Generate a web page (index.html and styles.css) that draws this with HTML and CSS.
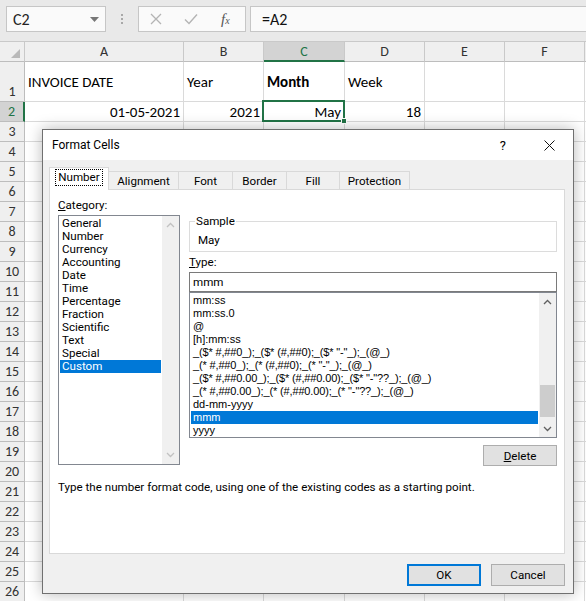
FILE: index.html
```html
<!DOCTYPE html>
<html lang="en">
<head>
    <meta charset="UTF-8">
    <meta name="viewport" content="width=device-width, initial-scale=1.0">
    <title>Format Cells</title>
    <link rel="stylesheet" href="styles.css">
</head>
<body>
    <div class="ribbon">
        <div class="namebox">
            <span>C2</span>
            <svg class="drop" width="9" height="5" viewBox="0 0 9 5"><path d="M0 0H9L4.5 5Z" fill="#777"/></svg>
        </div>
        <div class="grip"><i></i><i></i><i></i></div>
        <div class="fxbox">
            <svg width="12" height="12" viewBox="0 0 12 12"><path d="M1 1L11 11M11 1L1 11" stroke="#b4b4b4" stroke-width="1.3"/></svg>
            <svg width="14" height="12" viewBox="0 0 14 12"><path d="M1 6.5L5 10.5L13 1.5" fill="none" stroke="#b4b4b4" stroke-width="1.4"/></svg>
            <span class="fx">f<small>x</small></span>
        </div>
        <div class="formula">=A2</div>
    </div>

    <div class="sheet">
        <div class="row head">
            <span class="corner"><svg width="9" height="9" viewBox="0 0 9 9"><path d="M9 0V9H0Z" fill="#b9b9b9"/></svg></span>
            <span>A</span><span>B</span><span class="sel">C</span><span>D</span><span>E</span><span>F</span><span></span>
        </div>
        <div class="row tall">
            <span class="rh">1</span>
            <span>INVOICE DATE</span><span>Year</span><span class="bold">Month</span><span>Week</span><span></span><span></span><span></span>
        </div>
        <div class="row">
            <span class="rh sel">2</span>
            <span class="num">01-05-2021</span><span class="num">2021</span><span class="num cur">May</span><span class="num">18</span><span></span><span></span><span></span>
        </div>
        <div class="row"><span class="rh">3</span><span></span><span></span><span></span><span></span><span></span><span></span><span></span></div>
        <div class="row"><span class="rh">4</span><span></span><span></span><span></span><span></span><span></span><span></span><span></span></div>
        <div class="row"><span class="rh">5</span><span></span><span></span><span></span><span></span><span></span><span></span><span></span></div>
        <div class="row"><span class="rh">6</span><span></span><span></span><span></span><span></span><span></span><span></span><span></span></div>
        <div class="row"><span class="rh">7</span><span></span><span></span><span></span><span></span><span></span><span></span><span></span></div>
        <div class="row"><span class="rh">8</span><span></span><span></span><span></span><span></span><span></span><span></span><span></span></div>
        <div class="row"><span class="rh">9</span><span></span><span></span><span></span><span></span><span></span><span></span><span></span></div>
        <div class="row"><span class="rh">10</span><span></span><span></span><span></span><span></span><span></span><span></span><span></span></div>
        <div class="row"><span class="rh">11</span><span></span><span></span><span></span><span></span><span></span><span></span><span></span></div>
        <div class="row"><span class="rh">12</span><span></span><span></span><span></span><span></span><span></span><span></span><span></span></div>
        <div class="row"><span class="rh">13</span><span></span><span></span><span></span><span></span><span></span><span></span><span></span></div>
        <div class="row"><span class="rh">14</span><span></span><span></span><span></span><span></span><span></span><span></span><span></span></div>
        <div class="row"><span class="rh">15</span><span></span><span></span><span></span><span></span><span></span><span></span><span></span></div>
        <div class="row"><span class="rh">16</span><span></span><span></span><span></span><span></span><span></span><span></span><span></span></div>
        <div class="row"><span class="rh">17</span><span></span><span></span><span></span><span></span><span></span><span></span><span></span></div>
        <div class="row"><span class="rh">18</span><span></span><span></span><span></span><span></span><span></span><span></span><span></span></div>
        <div class="row"><span class="rh">19</span><span></span><span></span><span></span><span></span><span></span><span></span><span></span></div>
        <div class="row"><span class="rh">20</span><span></span><span></span><span></span><span></span><span></span><span></span><span></span></div>
        <div class="row"><span class="rh">21</span><span></span><span></span><span></span><span></span><span></span><span></span><span></span></div>
        <div class="row"><span class="rh">22</span><span></span><span></span><span></span><span></span><span></span><span></span><span></span></div>
        <div class="row"><span class="rh">23</span><span></span><span></span><span></span><span></span><span></span><span></span><span></span></div>
        <div class="row"><span class="rh">24</span><span></span><span></span><span></span><span></span><span></span><span></span><span></span></div>
        <div class="row"><span class="rh">25</span><span></span><span></span><span></span><span></span><span></span><span></span><span></span></div>
        <div class="row"><span class="rh">26</span><span></span><span></span><span></span><span></span><span></span><span></span><span></span></div>
    </div>

    <div class="dialog">
        <div class="titlebar">
            <span class="title">Format Cells</span>
            <span class="help">?</span>
            <svg class="close" width="11" height="11" viewBox="0 0 11 11"><path d="M0.5 0.5L10.5 10.5M10.5 0.5L0.5 10.5" stroke="#111" stroke-width="1"/></svg>
        </div>
        <div class="dlg-body">
            <div class="tabs">
                <div class="tab on"><span class="focus">Number</span></div>
                <div class="tab t-align">Alignment</div>
                <div class="tab t-font">Font</div>
                <div class="tab t-border">Border</div>
                <div class="tab t-fill">Fill</div>
                <div class="tab t-prot">Protection</div>
            </div>
            <div class="panel">
                <div class="cat">
                    <div class="lbl"><u>C</u>ategory:</div>
                    <div class="listbox cat-list">
                        <ul>
                            <li>General</li>
                            <li>Number</li>
                            <li>Currency</li>
                            <li>Accounting</li>
                            <li>Date</li>
                            <li>Time</li>
                            <li>Percentage</li>
                            <li>Fraction</li>
                            <li>Scientific</li>
                            <li>Text</li>
                            <li>Special</li>
                            <li class="picked">Custom</li>
                        </ul>
                        <div class="vscroll off">
                            <svg width="9" height="6" viewBox="0 0 9 6"><path d="M1 5L4.5 1.5L8 5" fill="none" stroke="currentColor" stroke-width="1.3"/></svg>
                            <svg width="9" height="6" viewBox="0 0 9 6"><path d="M1 1L4.5 4.5L8 1" fill="none" stroke="currentColor" stroke-width="1.3"/></svg>
                        </div>
                    </div>
                </div>
                <div class="right">
                    <fieldset class="sample">
                        <legend>Sample</legend>
                        <div class="sample-val">May</div>
                    </fieldset>
                    <div class="lbl type-lbl"><u>T</u>ype:</div>
                    <div class="input">mmm</div>
                    <div class="listbox type-list">
                        <ul>
                            <li>mm:ss</li>
                            <li>mm:ss.0</li>
                            <li>@</li>
                            <li>[h]:mm:ss</li>
                            <li class="code">_($* #,##0_);_($* (#,##0);_($* "-"_);_(@_)</li>
                            <li class="code">_(* #,##0_);_(* (#,##0);_(* "-"_);_(@_)</li>
                            <li class="code">_($* #,##0.00_);_($* (#,##0.00);_($* "-"??_);_(@_)</li>
                            <li class="code">_(* #,##0.00_);_(* (#,##0.00);_(* "-"??_);_(@_)</li>
                            <li>dd-mm-yyyy</li>
                            <li class="picked">mmm</li>
                            <li>yyyy</li>
                        </ul>
                        <div class="vscroll">
                            <svg width="9" height="6" viewBox="0 0 9 6"><path d="M1 5L4.5 1.5L8 5" fill="none" stroke="currentColor" stroke-width="1.3"/></svg>
                            <div class="track"><div class="thumb"></div></div>
                            <svg width="9" height="6" viewBox="0 0 9 6"><path d="M1 1L4.5 4.5L8 1" fill="none" stroke="currentColor" stroke-width="1.3"/></svg>
                        </div>
                    </div>
                    <div class="del-row"><button class="btn"><u>D</u>elete</button></div>
                </div>
                <p class="hint">Type the number format code, using one of the existing codes as a starting point.</p>
            </div>
            <div class="buttons">
                <button class="btn ok">OK</button>
                <button class="btn">Cancel</button>
            </div>
        </div>
    </div>
</body>
</html>
```

FILE: styles.css
```css
*,*::after,*::before{
    box-sizing: border-box;
}
body{
    margin: 0;
    overflow: hidden;
    position: relative;
    width: 586px;
    height: 601px;
    background: #fff;
    font-family: Carlito, Lato, "Liberation Sans", sans-serif;
}

/* formula bar */
.ribbon{
    height: 42px;
    background: #e9e9e9;
    border-bottom: 1px solid #c9c9c9;
    display: flex;
    align-items: flex-start;
    padding: 6px 0 0 6px;
}
.namebox,.fxbox,.formula{
    height: 26px;
    background: #fafafa;
    border: 1px solid #c6c6c6;
    display: flex;
    align-items: center;
}
.namebox{
    width: 100px;
    padding: 0 0 0 6px;
    justify-content: space-between;
    font-size: 16px;
    color: #222;
}
.namebox .drop{
    margin-right: 6px;
}
.grip{
    width: 32px;
    height: 26px;
    display: flex;
    flex-direction: column;
    align-items: center;
    justify-content: center;
    gap: 2px;
}
.grip i{
    width: 2px;
    height: 2px;
    background: #a8a8a8;
}
.fxbox{
    width: 108px;
    padding: 0 0 0 11px;
    gap: 22px;
}
.fx{
    font-family: "Liberation Serif", serif;
    font-style: italic;
    font-size: 15px;
    color: #555;
    margin-left: 1px;
}
.fx small{
    font-size: 10px;
}
.formula{
    flex: 1;
    margin-left: 4px;
    border-right: none;
    padding-left: 11px;
    font-size: 16px;
    color: #111;
}

/* grid */
.row{
    display: flex;
    height: 20px;
}
.row > span{
    flex: none;
    width: 80px;
    height: 100%;
    border-right: 1px solid #dadada;
    border-bottom: 1px solid #dadada;
    font-size: 15px;
    padding: 0 3px;
    display: flex;
    align-items: center;
    white-space: nowrap;
}
.row > span:nth-child(1){ width: 25px; }
.row > span:nth-child(2){ width: 159px; }
.row > span:nth-child(4){ width: 81px; }
.row .rh,.row.head > span{
    background: #efefef;
    border-color: #bdbdbd;
    color: #333;
    justify-content: center;
    font-size: 14px;
    padding: 0;
}
.row.head > span{
    border-right-color: #c9c9c9;
}
.row.head .corner{
    justify-content: flex-end;
    align-items: flex-end;
    padding: 0 4px 3px 0;
}
.row.head .sel{
    background: #d3d3d3;
    color: #217346;
    border-bottom: 2px solid #217346;
}
.row .rh.sel{
    background: #d3d3d3;
    color: #217346;
    border-right: 2px solid #217346;
}
.row.tall{
    height: 40px;
}
.row.tall .rh{
    align-items: flex-end;
    padding-bottom: 1px;
}
.bold{
    font-weight: bold;
}
.num{
    justify-content: flex-end;
}
.row > span.cur{
    position: relative;
}
.cur::before{
    content: '';
    position: absolute;
    left: -2px;
    top: -2px;
    right: -1px;
    bottom: -1px;
    border: 2px solid #217346;
}
.cur::after{
    content: '';
    position: absolute;
    right: -3px;
    bottom: -3px;
    width: 6px;
    height: 6px;
    background: #217346;
    border: 1px solid #fff;
}

/* dialog */
.dialog{
    position: absolute;
    left: 42px;
    top: 129px;
    width: 532px;
    height: 465px;
    border: 1px solid #707070;
    background: #f0f0f0;
    box-shadow: 0 0 14px rgba(0,0,0,.28);
    font-family: "Segoe UI", Roboto, "Noto Sans", sans-serif;
    font-size: 11.6px;
    color: #000;
    display: flex;
    flex-direction: column;
}
.titlebar{
    height: 30px;
    background: #fff;
    display: flex;
    align-items: center;
    padding: 0 0 0 9px;
}
.title{
    flex: 1;
    font-size: 12px;
}
.help{
    font-size: 13px;
    margin-right: 38px;
}
.close{
    margin-right: 18px;
}
.dlg-body{
    flex: 1;
    padding: 7px 8px 0 6px;
}
.tabs{
    display: flex;
    align-items: flex-end;
    height: 22px;
    position: relative;
    z-index: 1;
}
.tab{
    height: 18px;
    border: 1px solid #d9d9d9;
    border-bottom: none;
    margin-left: -1px;
    display: flex;
    align-items: center;
    justify-content: center;
    background: #f0f0f0;
}
.tab.on{
    width: 60px;
    height: 23px;
    margin-left: 0;
    margin-bottom: -1px;
    background: #fff;
    padding-bottom: 3px;
}
.focus{
    border: 1px dotted #000;
    padding: 0 2px;
    line-height: 15px;
}
.t-align{ width: 71px; }
.t-font{ width: 55px; }
.t-border{ width: 55px; }
.t-fill{ width: 54px; }
.t-prot{ width: 71px; }

.panel{
    height: 365px;
    background: #fff;
    border: 1px solid #d9d9d9;
    display: grid;
    grid-template-columns: 122px 368px;
    column-gap: 9px;
    align-content: start;
    padding: 8px 0 0 8px;
}
.lbl{
    line-height: 15px;
}
.listbox{
    border: 1px solid #828790;
    display: flex;
    background: #fff;
}
.listbox ul{
    flex: 1;
    list-style: none;
    margin: 0;
    padding: 1px;
}
.listbox li{
    height: 13px;
    line-height: 13px;
    padding-left: 2px;
    white-space: nowrap;
}
.listbox li.picked{
    background: #0078d7;
    color: #fff;
}
.cat-list{
    height: 250px;
    margin-top: 2px;
}
.type-list li{
    font-family: "Liberation Sans", Arial, sans-serif;
    font-size: 11px;
}
.type-list li.code{
    letter-spacing: -0.15px;
}
.vscroll{
    width: 17px;
    background: #f0f0f0;
    display: flex;
    flex-direction: column;
    justify-content: space-between;
    align-items: center;
    padding: 6px 0;
    color: #606060;
}
.vscroll.off{
    color: #c2c2c2;
}
.type-list .vscroll{
    padding: 6px 0 5px;
}
.track{
    flex: 1;
    width: 100%;
    display: flex;
    flex-direction: column;
    justify-content: flex-end;
    padding: 0 1px 9px;
}
.thumb{
    height: 32px;
    background: #cdcdcd;
}
.right{
    margin-top: 16px;
}
.sample{
    margin: 0;
    padding: 0 8px 3px;
    border: 1px solid #dcdcdc;
    min-inline-size: 0;
}
.sample legend{
    padding: 0 1px;
    margin-left: -3px;
    line-height: 15px;
}
.sample-val{
    line-height: 15px;
    margin-top: 4px;
}
.type-lbl{
    margin-top: 3px;
}
.input{
    height: 20px;
    margin-top: 2px;
    border: 1px solid #7a7a7a;
    padding-left: 3px;
    line-height: 18px;
}
.type-list{
    height: 146px;
}
.del-row{
    display: flex;
    justify-content: flex-end;
    margin-top: 7px;
}
.btn{
    font: inherit;
    width: 74px;
    height: 21px;
    background: #e1e1e1;
    border: 1px solid #adadad;
    padding: 0;
    color: #000;
}
.hint{
    grid-column: 1 / 3;
    margin: 14px 0 0;
    line-height: 15px;
}
.buttons{
    display: flex;
    justify-content: flex-end;
    gap: 10px;
    margin-top: 10px;
}
.buttons .btn{
    height: 22px;
}
.btn.ok{
    border: 2px solid #0078d7;
}
```
